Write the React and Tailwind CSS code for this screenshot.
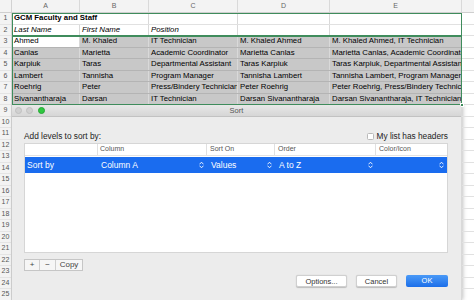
import React from 'react';

const COLS = [
  { key: 'A', w: 'w-[68px]' },
  { key: 'B', w: 'w-[69px]' },
  { key: 'C', w: 'w-[89px]' },
  { key: 'D', w: 'w-[92px]' },
  { key: 'E', w: 'w-[132px]' },
];

const PEOPLE = [
  ['Ahmed', 'M. Khaled', 'IT Technician', 'M. Khaled Ahmed', 'M. Khaled Ahmed, IT Technician'],
  ['Canlas', 'Marietta', 'Academic Coordinator', 'Marietta Canlas', 'Marietta Canlas, Academic Coordinator'],
  ['Karpiuk', 'Taras', 'Departmental Assistant', 'Taras Karpiuk', 'Taras Karpiuk, Departmental Assistant'],
  ['Lambert', 'Tannisha', 'Program Manager', 'Tannisha Lambert', 'Tannisha Lambert, Program Manager'],
  ['Roehrig', 'Peter', 'Press/Bindery Technician', 'Peter Roehrig', 'Peter Roehrig, Press/Bindery Technician'],
  ['Sivanantharaja', 'Darsan', 'IT Technician', 'Darsan Sivanantharaja', 'Darsan Sivanantharaja, IT Technician'],
];

function RowNum({ n }) {
  return (
    <div className="h-[11.5px] flex items-center justify-center text-[7px] text-[#555] border-b border-[#e4e4e4]">
      {n}
    </div>
  );
}

function Cell({ w, children, className = '' }) {
  return (
    <div className={`${w} shrink-0 h-full px-[2px] flex items-center border-r border-[#d9d9d9] whitespace-nowrap overflow-hidden ${className}`}>
      {children}
    </div>
  );
}

function Updown({ color = 'white' }) {
  return (
    <svg width="5" height="8" viewBox="0 0 5 8" fill="none" stroke={color} strokeWidth="0.9" strokeLinecap="round" strokeLinejoin="round">
      <path d="M0.8 3 L2.5 1.2 L4.2 3" />
      <path d="M0.8 5 L2.5 6.8 L4.2 5" />
    </svg>
  );
}

function SortDialog() {
  return (
    <div className="flex-1 h-full flex flex-col bg-[#ececec] shadow-[2px_0_4px_rgba(0,0,0,0.25)] font-['Liberation_Sans',sans-serif]">
      {/* title bar */}
      <div className="relative h-[12px] shrink-0 flex items-center bg-gradient-to-b from-[#e8e8e8] to-[#d6d6d6] border-b border-[#c2c2c2]">
        <div className="flex items-center gap-[4px] pl-[3px]">
          <span className="w-[7px] h-[7px] rounded-full bg-[#d0d0d0] border border-[#c0c0c0]" />
          <span className="w-[7px] h-[7px] rounded-full bg-[#d0d0d0] border border-[#c0c0c0]" />
          <span className="w-[7px] h-[7px] rounded-full bg-[#2fc840] border border-[#26a535] ml-[1px]" />
        </div>
        <div className="absolute inset-0 flex items-center justify-center text-[7.5px] text-[#555]">Sort</div>
      </div>

      <div className="flex-1 flex flex-col pl-[12px] pr-[13px]">
        <div className="mt-[13px] h-[12px] flex items-center justify-between">
          <span className="text-[8.3px] text-[#222]">Add levels to sort by:</span>
          <div className="flex items-center gap-[3px]">
            <span className="w-[7px] h-[7px] bg-white border border-[#b9b9b9] rounded-[1.5px]" />
            <span className="text-[8.3px] text-[#222]">My list has headers</span>
          </div>
        </div>

        <div className="mt-[1px] h-[110px] bg-white border border-[#d6d6d6] flex flex-col">
          <div className="h-[12px] flex text-[7px] text-[#555] border-b border-[#e2e2e2]">
            <div className="w-[73px] border-r border-[#e0e0e0]" />
            <div className="w-[109px] pl-[2px] flex items-center border-r border-[#e0e0e0]">Column</div>
            <div className="w-[68px] pl-[3px] flex items-center border-r border-[#e0e0e0]">Sort On</div>
            <div className="w-[101px] pl-[3px] flex items-center border-r border-[#e0e0e0]">Order</div>
            <div className="flex-1 pl-[3px] flex items-center">Color/Icon</div>
          </div>
          <div className="mt-[1px] h-[16px] flex text-[8.5px] text-white bg-[#1a6cef]">
            <div className="w-[73px] pl-[2px] flex items-center">Sort by</div>
            <div className="w-[109px] pl-[3px] pr-[3px] flex items-center justify-between">
              <span>Column A</span>
              <Updown />
            </div>
            <div className="w-[68px] pl-[4px] pr-[3px] flex items-center justify-between">
              <span>Values</span>
              <Updown />
            </div>
            <div className="w-[101px] pl-[4px] pr-[3px] flex items-center justify-between">
              <span>A to Z</span>
              <Updown />
            </div>
            <div className="flex-1 pr-[3px] flex items-center justify-end">
              <Updown />
            </div>
          </div>
        </div>

        <div className="mt-[6px] h-[12px] flex">
          <div className="flex border border-[#c6c6c6] bg-[#f6f6f6] text-[8px] text-[#444]">
            <span className="w-[15px] flex items-center justify-center border-r border-[#cfcfcf]">+</span>
            <span className="w-[16px] flex items-center justify-center border-r border-[#cfcfcf]">−</span>
            <span className="w-[26px] flex items-center justify-center">Copy</span>
          </div>
        </div>

        <div className="mt-[4px] h-[12px] flex justify-end gap-[9px] text-[7.5px]">
          <button className="w-[51px] h-full bg-white rounded-[2px] border border-[#d0d0d0] shadow-[0_0.5px_1px_rgba(0,0,0,0.2)] text-[#333]">Options...</button>
          <button className="w-[41px] h-full bg-white rounded-[2px] border border-[#d0d0d0] shadow-[0_0.5px_1px_rgba(0,0,0,0.2)] text-[#333]">Cancel</button>
          <button className="w-[42px] h-full rounded-[2px] bg-gradient-to-b from-[#4a9af7] to-[#1b6ee9] text-white">OK</button>
        </div>
      </div>
    </div>
  );
}

export default function App() {
  const lowerRows = Array.from({ length: 17 }, (_, i) => i + 9);

  return (
    <div className="w-[474px] h-[300px] overflow-hidden bg-white flex flex-col font-['Liberation_Sans',sans-serif] text-black">
      {/* column header */}
      <div className="h-[13px] shrink-0 flex bg-[#f3f3f3] border-b border-[#cfcfcf] text-[7px] text-[#666]">
        <div className="w-[12px] shrink-0 border-r border-[#d2d2d2]" />
        {COLS.map((c) => (
          <div key={c.key} className={`${c.w} shrink-0 flex items-center justify-center border-r border-[#d9d9d9]`}>
            {c.key}
          </div>
        ))}
        <div className="flex-1" />
      </div>

      {/* rows 1-8 */}
      <div className="flex shrink-0">
        <div className="w-[12px] shrink-0 bg-[#f3f3f3] border-r border-[#d2d2d2]">
          {[1, 2, 3, 4, 5, 6, 7, 8].map((n) => <RowNum key={n} n={n} />)}
        </div>
        <div className="w-[450px] shrink-0 flex flex-col text-[7.8px]">
          <div className="outline outline-1 -outline-offset-1 outline-[#3f8c5c]">
            <div className="h-[11.5px] flex border-b border-[#e1e1e1]">
              <div className="px-[2px] flex items-center font-bold whitespace-nowrap w-[137px] border-r border-[#d9d9d9]">GCM Faculty and Staff</div>
              <Cell w="w-[89px]" />
              <Cell w="w-[92px]" />
              <Cell w="w-[132px]" />
            </div>
            <div className="h-[11.5px] flex italic border-b border-[#e1e1e1]">
              <Cell w="w-[68px]">Last Name</Cell>
              <Cell w="w-[69px]">First Name</Cell>
              <Cell w="w-[89px]">Position</Cell>
              <Cell w="w-[92px]" />
              <Cell w="w-[132px]" />
            </div>
          </div>
          <div className="relative outline outline-1 -outline-offset-1 outline-[#3f8c5c] bg-[#c8c8c8]">
            {PEOPLE.map((row, ri) => (
              <div key={ri} className="h-[11.5px] flex border-b border-[#b4b4b4]">
                {row.map((v, ci) => (
                  <Cell key={ci} w={COLS[ci].w} className={`border-[#b4b4b4] ${ri === 0 && ci === 0 ? 'bg-white' : ''}`}>
                    {v}
                  </Cell>
                ))}
              </div>
            ))}
            <span className="absolute right-[-2px] bottom-[-2px] w-[4px] h-[4px] bg-[#3f8c5c] border border-white" />
          </div>
        </div>
        <div className="flex-1">
          {[1, 2, 3, 4, 5, 6, 7, 8].map((n) => (
            <div key={n} className="h-[11.5px] border-b border-[#e1e1e1]" />
          ))}
        </div>
      </div>

      {/* rows 9-25 with the sort sheet on top */}
      <div className="flex flex-1 min-h-0">
        <div className="w-[12px] shrink-0 bg-[#f3f3f3] border-r border-[#d2d2d2]">
          {lowerRows.map((n) => <RowNum key={n} n={n} />)}
        </div>
        <SortDialog />
        <div className="w-[13px] shrink-0 border-l border-[#d9d9d9]">
          {lowerRows.map((n) => (
            <div key={n} className="h-[11.5px] border-b border-[#e1e1e1]" />
          ))}
        </div>
      </div>
    </div>
  );
}
